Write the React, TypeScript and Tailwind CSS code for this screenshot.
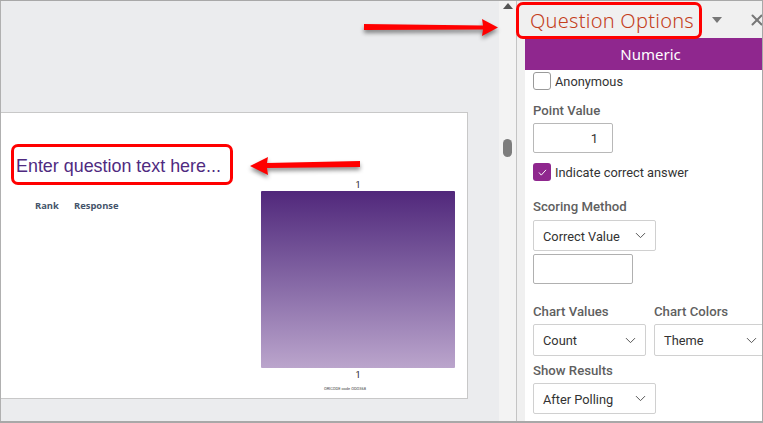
import { ChevronDown, X } from "lucide-react"

const ui = "font-['Roboto',sans-serif]"

function Label({ text }: { text: string }) {
    return <div className="h-[20px] pt-[1px] text-[13.2px] leading-[20px] font-medium text-[#5f5f5f]">{text}</div>
}

function Select({ text, width, height }: { text: string; width: string; height: string }) {
    return (
        <div className={`${width} ${height} shrink-0 flex items-center justify-between pl-[9px] pr-[6px] bg-white border border-[#d0d0d0] rounded-[2px] text-[12.8px] text-[#333]`}>
            <span className="pt-[2px]">{text}</span>
            <ChevronDown size={17} strokeWidth={1.4} className="text-[#555]" />
        </div>
    )
}

function Slide() {
    return (
        <div className="w-[467px] h-[287px] bg-white border border-[#c8c8c8] border-l-0 flex shrink-0">
            <div className="w-[260px] shrink-0 pt-[41px] pl-[15px]">
                <div className="h-[24px] text-[17.9px] leading-[24px] whitespace-nowrap text-[#4f2a7f] font-['Liberation_Sans',sans-serif]">Enter question text here...</div>
                <div className="flex mt-[22px] pl-[19px] text-[9.4px] leading-[12px] font-bold text-[#44546a] font-['Open_Sans',sans-serif]">
                    <span className="w-[39px]">Rank</span>
                    <span>Response</span>
                </div>
            </div>
            <div className="w-[194px] pt-[65px] flex flex-col items-center">
                <div className="h-[13px] text-[9px] leading-[15px] text-[#222]">1</div>
                <div className="w-[194px] h-[177px] shrink-0 rounded-[1px] bg-gradient-to-b from-[#51277b] to-[#bba5cc]" />
                <div className="h-[13px] text-[9px] leading-[15px] text-[#222]">1</div>
                <div className="mt-[5px] mr-[26px] text-[4px] leading-[6px] text-[#444]">ORICODE code ODO368</div>
            </div>
        </div>
    )
}

function Pane() {
    return (
        <div className="w-[246px] h-full shrink-0 bg-[#f0f0f0] flex flex-col border-l border-[#c4c4c4]">
            <div className="h-[37px] shrink-0 flex items-center pl-[13px]">
                <span className="font-['Noto_Sans',sans-serif] text-[20px] leading-[37px] mt-[2px] tracking-[0.25px] font-light text-[#c43e1c] whitespace-nowrap">Question Options</span>
                <svg viewBox="0 0 10 6" className="w-[10px] h-[6px] ml-[18px] fill-[#777] shrink-0"><path d="M0 0 H10 L5 6 Z" /></svg>
                <X size={18} strokeWidth={2.6} className="ml-[26px] text-[#777] shrink-0" />
            </div>
            <div className="flex-1 ml-[8px] bg-white flex flex-col min-h-0 overflow-hidden">
                <div className="h-[32px] shrink-0 pl-[14px] bg-[#8f278e] text-white font-['Noto_Sans',sans-serif] text-[15px] leading-[32px] text-center">Numeric</div>
                <div className="pl-[8px] flex flex-col">
                    <div className="flex items-center h-[18px] mt-[2px] gap-[4px]">
                        <div className="w-[18px] h-[18px] bg-white border border-[#9a9a9a] rounded-[3px]" />
                        <span className="pt-[2px] text-[12.8px] text-[#333]">Anonymous</span>
                    </div>
                    <div className="mt-[10px]"><Label text="Point Value" /></div>
                    <div className="w-[80px] h-[30px] mt-[3px] pr-[14px] bg-white border border-[#b8b8b8] rounded-[2px] text-[13px] leading-[30px] text-right text-[#333]">1</div>
                    <div className="flex items-center h-[18px] mt-[10px] gap-[4px]">
                        <div className="w-[18px] h-[18px] bg-[#8f278e] rounded-[3px] flex items-center justify-center">
                            <svg viewBox="0 0 10 8" className="w-[9px] h-[7px] fill-none stroke-white stroke-[1.1]"><path d="M1 4 L3.6 7 L9 1" /></svg>
                        </div>
                        <span className="pt-[2px] text-[12.8px] text-[#333]">Indicate correct answer</span>
                    </div>
                    <div className="mt-[15px]"><Label text="Scoring Method" /></div>
                    <div className="mt-[4px]"><Select text="Correct Value" width="w-[123px]" height="h-[31px]" /></div>
                    <div className="w-[100px] h-[30px] mt-[3px] bg-white border border-[#b0b0b0] rounded-[2px]" />
                    <div className="flex gap-[8px] mt-[17px]">
                        <div>
                            <Label text="Chart Values" />
                            <div className="mt-[3px]"><Select text="Count" width="w-[113px]" height="h-[32px]" /></div>
                        </div>
                        <div>
                            <Label text="Chart Colors" />
                            <div className="mt-[3px]"><Select text="Theme" width="w-[113px]" height="h-[32px]" /></div>
                        </div>
                    </div>
                    <div className="mt-[4px]"><Label text="Show Results" /></div>
                    <div className="mt-[3px]"><Select text="After Polling" width="w-[123px]" height="h-[31px]" /></div>
                </div>
            </div>
        </div>
    )
}

export default function App() {
    return (
        <div className={`${ui} relative w-[763px] h-[423px] overflow-hidden bg-[#ebecee] border-t border-b-2 border-r border-[#a8a8a8]`}>
            <div className="flex h-full">
                <div className="w-[499px] shrink-0 pt-[111px] border-l border-[#b0b0b0]">
                    <Slide />
                </div>
                <div className="w-[17px] shrink-0 bg-[#f3f3f3] flex flex-col items-center pt-[2px]">
                    <svg viewBox="0 0 10 6" className="w-[10px] h-[6px] fill-[#555]"><path d="M5 0 L10 6 H0 Z" /></svg>
                    <div className="w-[9px] h-[18px] mt-[130px] rounded-full bg-[#7d7d7d]" />
                </div>
                <Pane />
            </div>

            {/* red callouts and arrows from the annotated screenshot */}
            <div className="absolute left-[516px] top-[1px] w-[186px] h-[37px] border-[3px] border-[#ff0000] rounded-[7px]" />
            <div className="absolute left-[11px] top-[143px] w-[222px] h-[41px] border-[3px] border-[#ff0000] rounded-[7px]" />
            <svg viewBox="0 0 134 18" className="absolute left-[364px] top-[18px] w-[134px] h-[18px] fill-[#ff0000] drop-shadow-[0_3px_2px_rgba(0,0,0,0.45)]">
                <path d="M0 5 L119 6.5 L118 0 L134 8.5 L118 17 L119 10.5 L0 11 Z" />
            </svg>
            <svg viewBox="0 0 110 18" className="absolute left-[250px] top-[156px] w-[110px] h-[18px] fill-[#ff0000] drop-shadow-[0_3px_2px_rgba(0,0,0,0.45)]">
                <path d="M110 4 L17 6 L18 0 L0 9 L18 18 L17 11 L110 10 Z" />
            </svg>
        </div>
    )
}
